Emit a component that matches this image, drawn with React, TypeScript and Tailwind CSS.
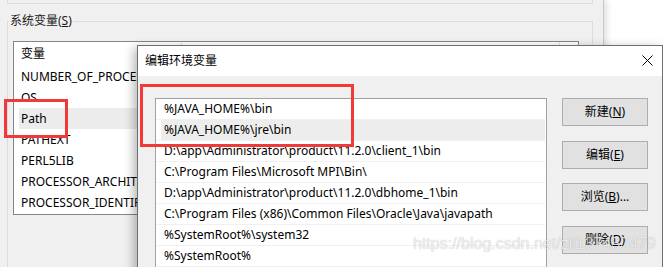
const sysVars = [
  "NUMBER_OF_PROCESSORS",
  "OS",
  "Path",
  "PATHEXT",
  "PERL5LIB",
  "PROCESSOR_ARCHITECTURE",
  "PROCESSOR_IDENTIFIER",
];

const paths = [
  "%JAVA_HOME%\\bin",
  "%JAVA_HOME%\\jre\\bin",
  "D:\\app\\Administrator\\product\\11.2.0\\client_1\\bin",
  "C:\\Program Files\\Microsoft MPI\\Bin\\",
  "D:\\app\\Administrator\\product\\11.2.0\\dbhome_1\\bin",
  "C:\\Program Files (x86)\\Common Files\\Oracle\\Java\\javapath",
  "%SystemRoot%\\system32",
  "%SystemRoot%",
];

function WinButton({ label, hot, tail, className }: { label: string; hot: string; tail?: string; className?: string }) {
  return (
    <button className={`w-[86px] h-[28px] shrink-0 border border-[#adadad] bg-[#e1e1e1] text-[12px] leading-none flex items-center justify-center ${className ?? ""}`}>
      {label}(<u>{hot}</u>){tail}
    </button>
  );
}

export default function App() {
  return (
    <div className="relative w-[663px] h-[267px] overflow-hidden bg-white text-[12px] text-black font-['Noto_Sans','Noto_Sans_CJK_SC',sans-serif]">
      {/* parent: system properties window */}
      <div className="w-[604px] h-full bg-[#f0f0f0] border-r border-[#c8c8c8] shadow-[3px_0_6px_rgba(0,0,0,0.12)] flex flex-col">
        <div className="ml-[7px] w-[586px] h-[4px] border-x border-b border-[#dcdcdc]" />
        <div className="relative ml-[7px] mt-[17px] w-[586px] flex-1 border border-[#dcdcdc] border-b-0 pt-[19px] pl-[5px]">
          <span className="absolute left-[1px] -top-[9px] bg-[#f0f0f0] px-[1px] leading-[16px] text-[#1a1a1a]">
            系统变量(<u>S</u>)
          </span>
          <div className="w-[566px] h-[174px] border border-[#828790] bg-white flex flex-col">
            <div className="h-[24px] flex shrink-0">
              <div className="w-[168px] border-r border-[#e5e5e5] pl-[7px] flex items-center">变量</div>
              <div className="w-[378px] border-r border-[#e5e5e5]" />
            </div>
            {sysVars.map((v) => (
              <div
                key={v}
                className={`h-[21px] ml-[5px] pl-[2px] flex items-center whitespace-nowrap ${v === "Path" ? "bg-[#ececec]" : ""}`}
              >
                {v}
              </div>
            ))}
          </div>
        </div>
      </div>

      {/* edit environment variable dialog */}
      <div className="absolute left-[137px] top-[45px] w-[526px] h-[240px] border border-[#6f6f6f] bg-[#f0f0f0] shadow-[-3px_3px_10px_rgba(0,0,0,0.3)] flex flex-col">
        <div className="h-[30px] bg-white flex items-center justify-between pl-[7px] pr-[9px] shrink-0">
          <span>编辑环境变量</span>
          <svg width="11" height="11" viewBox="0 0 11 11" className="mb-[2px]">
            <path d="M0.5 0.5 L10.5 10.5 M10.5 0.5 L0.5 10.5" stroke="#000" strokeWidth="1" fill="none" />
          </svg>
        </div>
        <div className="flex pt-[22px] pl-[17px]">
          <div className="w-[392px] h-[180px] border border-[#a0a0a0] bg-white px-[1px] overflow-hidden">
            {paths.map((p, i) => (
              <div key={p} className="h-[21px] border-b border-[#f0f0f0] flex">
                <div className={`flex-1 flex items-center whitespace-nowrap ${i === 1 ? "ml-[4px] pl-[3px] bg-[#ededed]" : "pl-[7px]"}`}>
                  {p}
                </div>
              </div>
            ))}
          </div>
          <div className="ml-[15px] flex flex-col">
            <WinButton label="新建" hot="N" />
            <WinButton label="编辑" hot="E" className="mt-[15px]" />
            <WinButton label="浏览" hot="B" tail="..." className="mt-[14px]" />
            <WinButton label="删除" hot="D" className="mt-[15px]" />
          </div>
        </div>
      </div>

      {/* annotations */}
      <div className="absolute left-[4px] top-[99px] w-[64px] h-[39px] border-[3px] border-[#f03a3a]" />
      <div className="absolute left-[140px] top-[84px] w-[214px] h-[63px] border-[3px] border-[#f03a3a]" />

      <span className="absolute left-[413px] top-[234px] text-[16px] leading-[20px] font-['Liberation_Sans',sans-serif] text-white/75 [text-shadow:0_0_1px_rgba(0,0,0,0.3)] whitespace-nowrap pointer-events-none">
        https://blog.csdn.net/zll137457479
      </span>
    </div>
  );
}
